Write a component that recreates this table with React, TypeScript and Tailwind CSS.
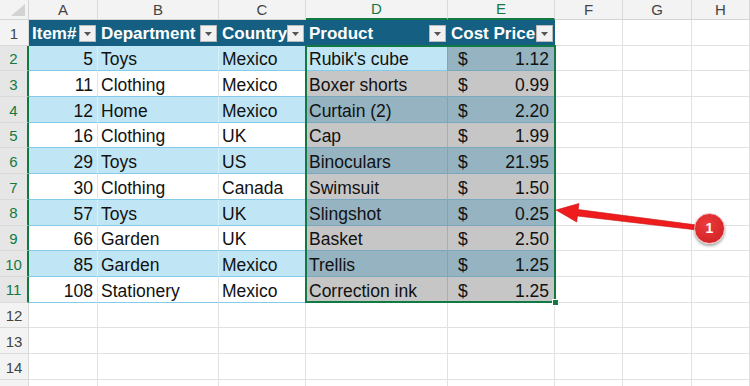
import type { ReactNode } from 'react';

type Row = [number, string, string, string, string];

const rows: Row[] = [
  [5, 'Toys', 'Mexico', "Rubik's cube", '1.12'],
  [11, 'Clothing', 'Mexico', 'Boxer shorts', '0.99'],
  [12, 'Home', 'Mexico', 'Curtain (2)', '2.20'],
  [16, 'Clothing', 'UK', 'Cap', '1.99'],
  [29, 'Toys', 'US', 'Binoculars', '21.95'],
  [30, 'Clothing', 'Canada', 'Swimsuit', '1.50'],
  [57, 'Toys', 'UK', 'Slingshot', '0.25'],
  [66, 'Garden', 'UK', 'Basket', '2.50'],
  [85, 'Garden', 'Mexico', 'Trellis', '1.25'],
  [108, 'Stationery', 'Mexico', 'Correction ink', '1.25'],
];

const letters = ['A', 'B', 'C', 'D', 'E', 'F', 'G', 'H'];
const headers = ['Item#', 'Department', 'Country', 'Product', 'Cost Price'];

function FilterButton() {
  return (
    <span className="ml-auto flex h-[17px] w-[17px] shrink-0 items-center justify-center border border-[#b9b9b9] bg-[#f2f2f2]">
      <svg width="7" height="4" viewBox="0 0 7 4" aria-hidden="true">
        <path d="M0 0h7L3.5 4z" fill="#555" />
      </svg>
    </span>
  );
}

function Cell({ className, children }: { className: string; children?: ReactNode }) {
  return <div className={`flex items-center overflow-hidden whitespace-nowrap ${className}`}>{children}</div>;
}

export default function App() {
  return (
    <div className="relative h-[386px] w-[750px] overflow-hidden bg-white font-['Liberation_Sans',Arial,sans-serif] text-[17.5px] text-[#111]">
      <div className="grid grid-cols-[29px_69px_121px_87px_142px_107px_68px_69px_1fr] grid-rows-[20px_repeat(15,25.7px)]">
        {/* column letters */}
        <div className="relative border-b border-r border-[#d4d4d4] bg-[#f3f3f3]">
          <svg className="absolute bottom-[3px] right-[3px]" width="14" height="12" viewBox="0 0 14 12" aria-hidden="true">
            <path d="M14 0v12H0z" fill="#d3d3d3" />
          </svg>
        </div>
        {letters.map((l) => {
          const sel = l === 'D' || l === 'E';
          return (
            <Cell
              key={l}
              className={`justify-center border-r border-[#dadada] bg-[#f3f3f3] pt-[1px] text-[15px] ${
                sel ? 'border-b-2 border-b-[#117a43] text-[#117a43]' : 'border-b border-b-[#d4d4d4] text-[#444]'
              }`}
            >
              {l}
            </Cell>
          );
        })}

        {/* header row */}
        <Cell className="justify-center border-b border-r border-[#dadada] bg-[#f3f3f3] pt-[3px] text-[15px] text-[#444]">
          1
        </Cell>
        {headers.map((h) => (
          <Cell key={h} className="bg-[#155f82] pl-[3px] pr-[2px] pt-[2px] text-[17px] font-bold text-white">
            {h}
            <FilterButton />
          </Cell>
        ))}
        {['F', 'G', 'H'].map((c) => (
          <div key={c} className="border-b border-r border-[#e1e1e1]" />
        ))}

        {/* table body */}
        {rows.map((r, i) => {
          const n = i + 2;
          const band = n % 2 === 0;
          const base = band ? 'bg-[#c0e6f5] border-r-[#d9f0f9]' : 'bg-white border-r-[#e4e4e4]';
          const line = 'border-b border-b-[#84cbea]';
          const selBg = band ? 'bg-[#95b3c1] border-b-[#7aa9bf]' : 'bg-[#c6c6c6] border-b-[#7aa9bf]';
          const dBg = n === 2 ? 'bg-[#c0e6f5] border-b-[#84cbea]' : selBg;
          return [
            <Cell
              key={`h${n}`}
              className="justify-center border-b border-r-2 border-b-[#dadada] border-r-[#117a43] bg-[#e6e6e6] pt-[3px] text-[15px] text-[#117a43]"
            >
              {n}
            </Cell>,
            <Cell key={`a${n}`} className={`justify-end border-r pr-[4px] pt-[3px] ${base} ${line}`}>
              {r[0]}
            </Cell>,
            <Cell key={`b${n}`} className={`border-r pl-[3px] pt-[3px] ${base} ${line}`}>
              {r[1]}
            </Cell>,
            <Cell key={`c${n}`} className={`border-r pl-[3px] pt-[3px] ${base} ${line}`}>
              {r[2]}
            </Cell>,
            <Cell
              key={`d${n}`}
              className={`border-b border-r pl-[3px] pt-[3px] ${dBg} ${band ? 'border-r-[#83a3b1]' : 'border-r-[#adadad]'}`}
            >
              {r[3]}
            </Cell>,
            <Cell key={`e${n}`} className={`border-b pl-[10px] pr-[6px] pt-[3px] ${selBg}`}>
              <span>$</span>
              <span className="ml-auto">{r[4]}</span>
            </Cell>,
            ...['F', 'G', 'H'].map((c) => <div key={`${c}${n}`} className="border-b border-r border-[#e1e1e1]" />),
          ];
        })}

        {/* empty rows */}
        {[12, 13, 14, 15].map((n) => [
          <Cell
            key={`h${n}`}
            className="justify-center border-b border-r border-[#dadada] bg-[#f3f3f3] pt-[3px] text-[15px] text-[#444]"
          >
            {n < 15 ? n : null}
          </Cell>,
          ...letters.map((c) => <div key={`${c}${n}`} className="border-b border-r border-[#e1e1e1]" />),
        ])}
      </div>

      {/* selection outline D2:E11 */}
      <div className="pointer-events-none absolute left-[305px] top-[45px] h-[258px] w-[251px] border-2 border-[#117a43]" />
      <div className="pointer-events-none absolute left-[552px] top-[299px] h-[7px] w-[7px] border border-white bg-[#117a43]" />

      {/* callout arrow */}
      <svg className="pointer-events-none absolute left-0 top-0" width="750" height="386" aria-hidden="true">
        <polygon
          points="556,210 579,203.5 578.2,209.5 697,225 696.8,230 577.4,216 576.7,222"
          fill="#ee1c1c"
          stroke="#c81010"
          strokeWidth="0.6"
          strokeLinejoin="round"
        />
      </svg>
      <div className="absolute left-[694px] top-[213px] flex h-[31px] w-[31px] items-center justify-center rounded-full border-[1.5px] border-[#f6b3b3] bg-[radial-gradient(circle_at_40%_35%,#ee3a3a,#c91f24)] text-[14px] font-bold text-white shadow-[0_2px_3px_rgba(0,0,0,0.35)]">
        1
      </div>
    </div>
  );
}
